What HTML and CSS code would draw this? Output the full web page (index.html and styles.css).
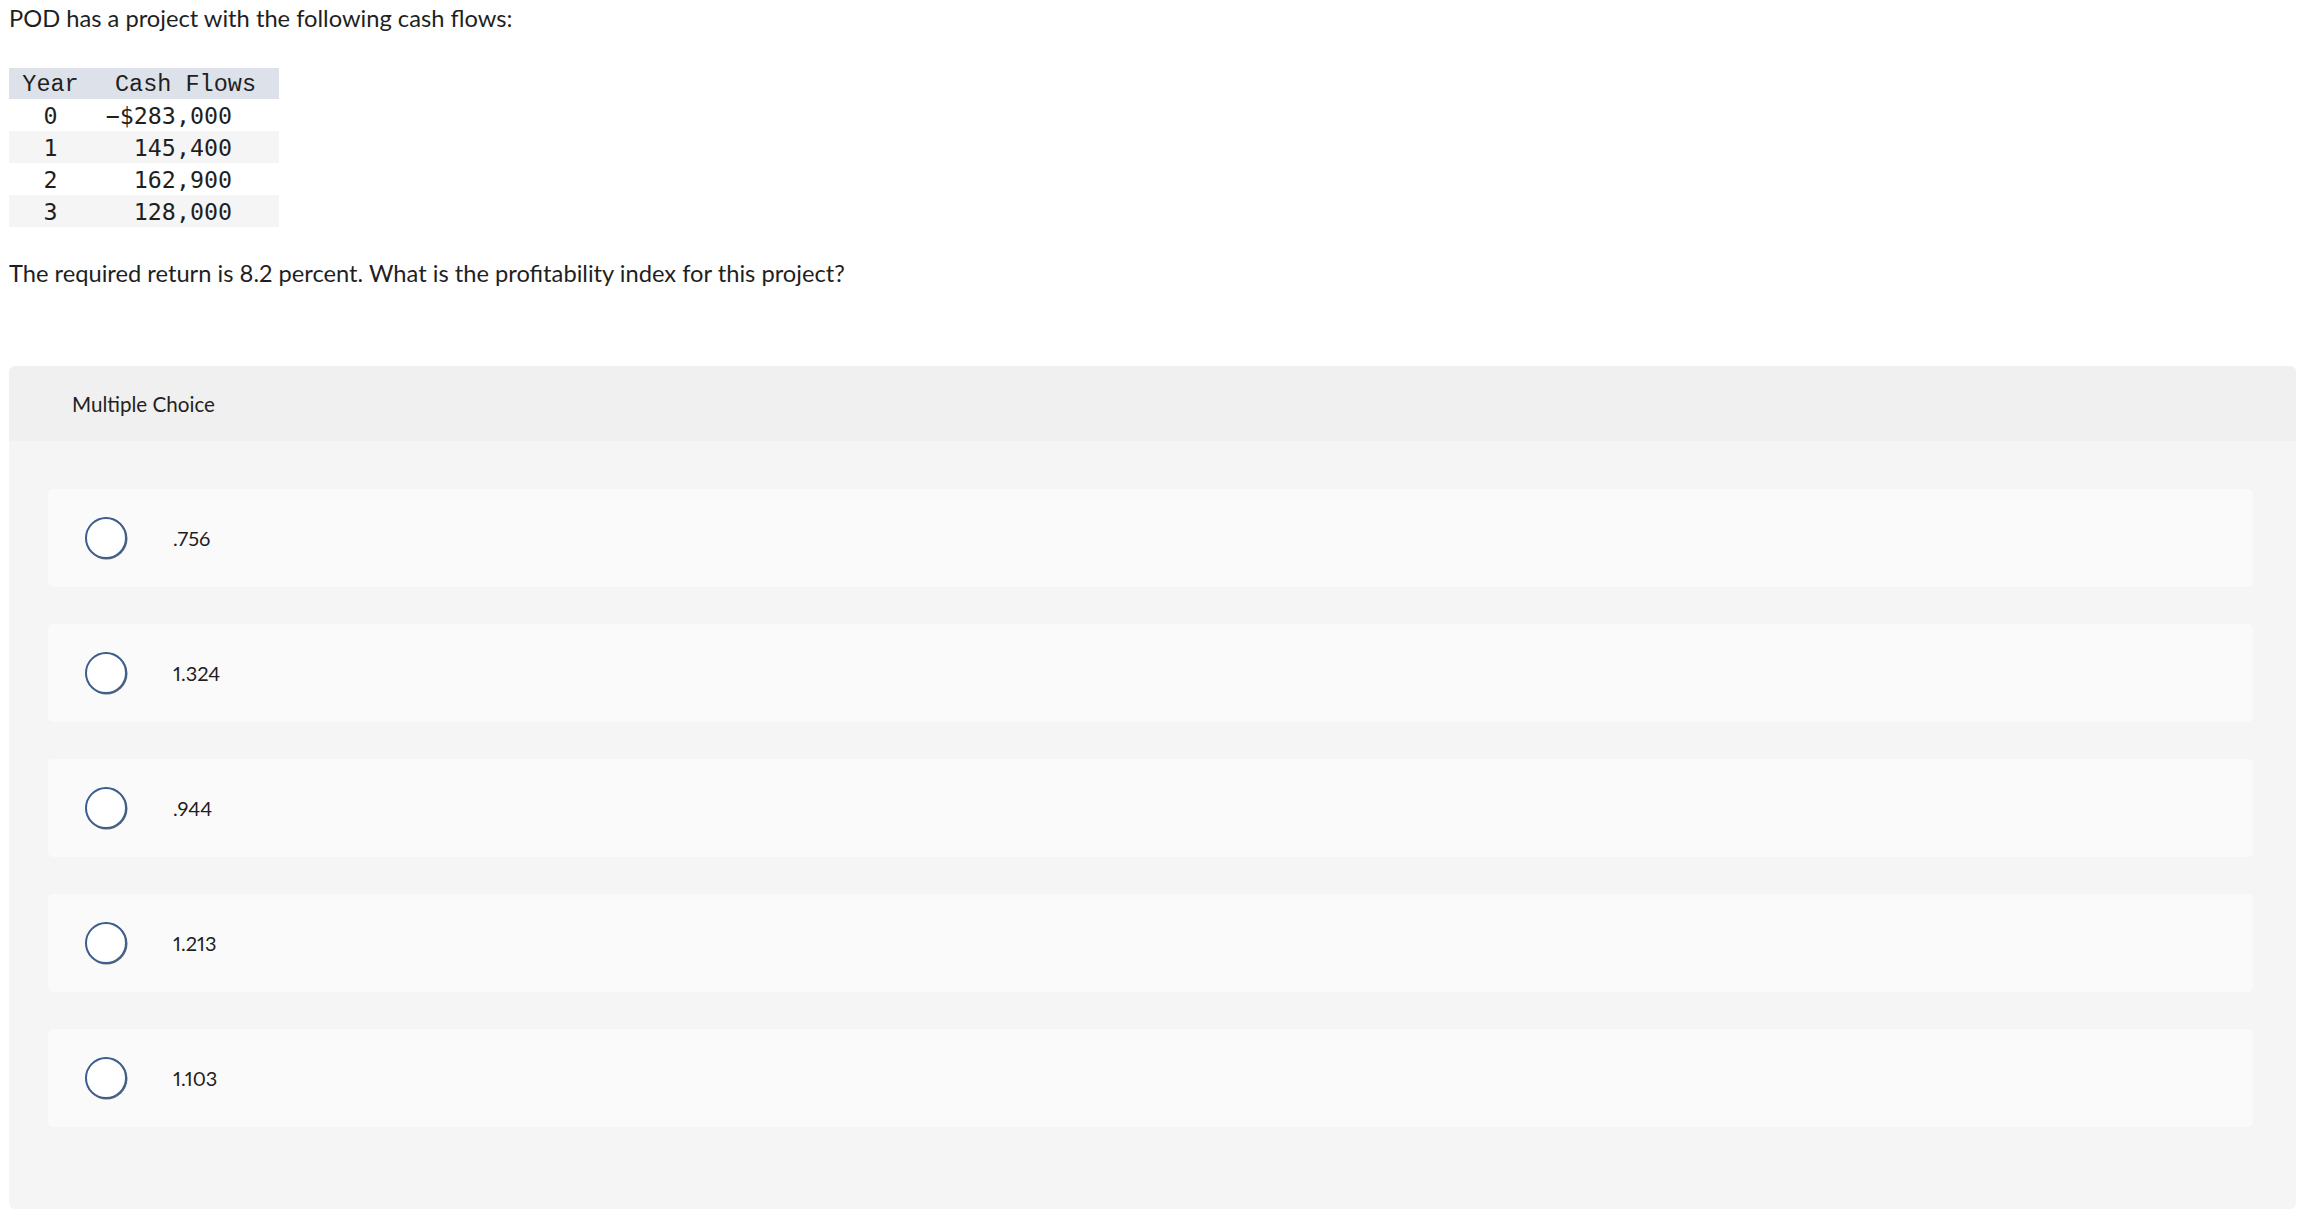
FILE: index.html
```html
<!DOCTYPE html>
<html lang="en">
<head>
<meta charset="utf-8">
<title>Profitability index question</title>
<link rel="stylesheet" href="styles.css">
</head>
<body>
<div class="page">
  <p class="prompt prompt-top">POD has a project with the following cash flows:</p>
  <table class="cash">
    <thead>
      <tr><th class="col-year">Year</th><th class="col-cash">Cash Flows</th></tr>
    </thead>
    <tbody>
      <tr><td class="col-year">0</td><td class="col-cash">&minus;$283,000</td></tr>
      <tr class="alt"><td class="col-year">1</td><td class="col-cash">145,400</td></tr>
      <tr><td class="col-year">2</td><td class="col-cash">162,900</td></tr>
      <tr class="alt"><td class="col-year">3</td><td class="col-cash">128,000</td></tr>
    </tbody>
  </table>
  <p class="prompt prompt-question">The required return is 8.2 percent. What is the profitability index for this project?</p>

  <section class="mc">
    <header class="mc-head">Multiple Choice</header>
    <div class="mc-body">
      <div class="choice"><span class="radio"></span><span class="label">.756</span></div>
      <div class="choice"><span class="radio"></span><span class="label">1.324</span></div>
      <div class="choice"><span class="radio"></span><span class="label">.944</span></div>
      <div class="choice"><span class="radio"></span><span class="label">1.213</span></div>
      <div class="choice"><span class="radio"></span><span class="label">1.103</span></div>
    </div>
  </section>
</div>
</body>
</html>
```
FILE: styles.css
```css
html, body {
  margin: 0;
  padding: 0;
  background: #ffffff;
}

body {
  font-family: "Lato", "Liberation Sans", sans-serif;
  font-variant-numeric: proportional-nums;
  color: #1f1f1f;
}

.page {
  padding: 0 28px 0 9px;
}

.prompt {
  margin: 0;
  font-size: 23.7px;
  line-height: 30px;
}

.prompt-top {
  padding-top: 3px;
}

.cash {
  margin-top: 35px;
  border-collapse: collapse;
  font-family: "Liberation Mono", "DejaVu Sans Mono", monospace;
  font-size: 23.5px;
  color: #1f1f1f;
}

.cash th {
  background: #dde1e9;
  font-weight: normal;
  height: 28px;
  padding: 3px 0 0;
  line-height: 26px;
  text-align: center;
}

.cash td {
  height: 31px;
  padding: 1px 0 0;
  line-height: 26px;
  font-family: "DejaVu Sans Mono", "Liberation Mono", monospace;
  font-size: 23.3px;
}

.cash .col-year {
  width: 83px;
  text-align: center;
}

.cash .col-cash {
  width: 187px;
}

.cash td.col-cash {
  text-align: right;
  padding-right: 47px;
  width: 140px;
}

.cash tr.alt td {
  background: #f5f5f5;
}

.prompt-question {
  margin-top: 31px;
}

.mc {
  margin-top: 78px;
  background: #f5f5f5;
  border-radius: 6px;
  overflow: hidden;
}

.mc-head {
  background: #f0f0f0;
  height: 75px;
  display: flex;
  align-items: center;
  padding-left: 63px;
  font-size: 20.6px;
  color: #222222;
}

.mc-body {
  display: flex;
  flex-direction: column;
  gap: 37px;
  padding: 48px 43px 82px 39px;
}

.choice {
  height: 98px;
  background: #fafafa;
  border-radius: 5px;
  display: flex;
  align-items: center;
  padding-left: 37px;
}

.radio {
  width: 38px;
  height: 38px;
  border: 2px solid #3d5f8e;
  border-radius: 50%;
  background: #ffffff;
  box-shadow: 0.5px 0.5px 0 0 #6b6b6b;
  flex: none;
}

.label {
  margin-left: 46px;
  font-size: 20px;
  color: #1f1f1f;
}
```
